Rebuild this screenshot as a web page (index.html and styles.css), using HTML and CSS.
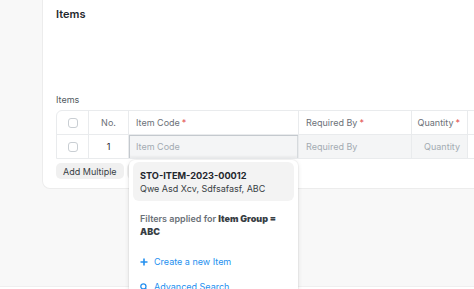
FILE: index.html
```html
<!DOCTYPE html>
<html lang="en">
<head>
    <meta charset="UTF-8">
    <meta name="viewport" content="width=device-width, initial-scale=1.0">
    <title>Items</title>
    <link rel="stylesheet" href="styles.css">
</head>
<body>
    <div class="page">
        <div class="card">
            <h2 class="section-title">Items</h2>
            <div class="field-label">Items</div>

            <div class="grid">
                <div class="row head">
                    <div class="cell check"><span class="box"></span></div>
                    <div class="cell no">No.</div>
                    <div class="cell">Item Code <span class="req">*</span></div>
                    <div class="cell">Required By <span class="req">*</span></div>
                    <div class="cell right">Quantity <span class="req">*</span></div>
                    <div class="cell"></div>
                </div>
                <div class="row data">
                    <div class="cell check"><span class="box"></span></div>
                    <div class="cell no idx">1</div>
                    <div class="cell input focused">
                        <span class="placeholder">Item Code</span>
                        <div class="dropdown">
                            <div class="option active">
                                <div class="option-title">STO-ITEM-2023-00012</div>
                                <div class="option-desc">Qwe Asd Xcv, Sdfsafasf, ABC</div>
                            </div>
                            <div class="filter-note">Filters applied for <b>Item Group = ABC</b></div>
                            <div class="action">
                                <svg width="8" height="8" viewBox="0 0 8 8"><path d="M4 0.5v7M0.5 4h7" stroke="#2490ef" stroke-width="1.6"/></svg>
                                <span>Create a new Item</span>
                            </div>
                            <div class="action">
                                <svg width="8" height="8" viewBox="0 0 8 8"><circle cx="3.4" cy="3.4" r="2.6" fill="none" stroke="#2490ef" stroke-width="1.3"/><path d="M5.3 5.3l2.2 2.2" stroke="#2490ef" stroke-width="1.3"/></svg>
                                <span>Advanced Search</span>
                            </div>
                        </div>
                    </div>
                    <div class="cell input"><span class="placeholder">Required By</span></div>
                    <div class="cell input right"><span class="placeholder">Quantity</span></div>
                    <div class="cell"></div>
                </div>
            </div>

            <div class="actions">
                <button class="btn">Add Multiple</button>
                <button class="btn">Add Row</button>
            </div>
        </div>
    </div>
    <div class="next-card"></div>
</body>
</html>
```
FILE: styles.css
```css
html {
    background-color: #f8f8f8;
}

body {
    margin: 0;
    height: 289px;
    overflow: hidden;
    background-color: #f8f8f8;
    font-family: Inter, 'Noto Sans', sans-serif;
    color: #1f272e;
}

.page {
    display: flex;
    align-items: flex-start;
    height: 286px;
    padding-left: 42px;
    background-color: #f8f8f8;
}

.card {
    flex: 1;
    margin-right: -60px;
    background-color: #fff;
    border: 1px solid #ececec;
    border-top: none;
    border-radius: 0 0 8px 8px;
    padding: 6px 0 9px 13px;
}

.section-title {
    margin: 0 0 72px;
    font-size: 11px;
    line-height: 16px;
    font-weight: 600;
}

.field-label {
    font-size: 9px;
    line-height: 12px;
    color: #525a61;
    margin-bottom: 4px;
}

.grid {
    border: 1px solid #e9ebed;
    border-radius: 6px 0 0 0;
}

.row {
    display: grid;
    grid-template-columns: 32px 40px 170px 113px 56px 1fr;
    height: 23px;
}

.row.head {
    height: 24px;
    border-bottom: 1px solid #e9ebed;
    box-sizing: border-box;
}

.cell {
    display: flex;
    align-items: center;
    box-sizing: border-box;
    border-right: 1px solid #e9ebed;
    padding: 0 7px;
    font-size: 9px;
    color: #6b7178;
    white-space: nowrap;
}

.cell.check,
.cell.no {
    justify-content: center;
    padding: 0;
}

.cell.right {
    justify-content: flex-end;
}

.idx {
    color: #1f272e;
}

.req {
    color: #e24c4c;
    margin-left: 2px;
}

.box {
    width: 8px;
    height: 8px;
    border: 1px solid #c9ced3;
    border-radius: 3px;
    background-color: #fff;
}

.cell.input {
    background-color: #f4f5f6;
}

.placeholder {
    color: #a3abb2;
}

.focused {
    position: relative;
    background-color: #f3f3f3;
    box-shadow: inset 1px 1px 0 #c4c9ce, inset -1px 0 0 #d6dadd, inset 0 -2px 2px rgba(0, 0, 0, 0.04);
}

.dropdown {
    position: absolute;
    top: 25px;
    left: 0;
    width: 169px;
    height: 140px;
    box-sizing: border-box;
    padding: 2px 4px;
    background-color: #fff;
    border-radius: 6px;
    box-shadow: 0 1px 5px rgba(0, 0, 0, 0.1), 0 0 0 1px rgba(0, 0, 0, 0.03);
    z-index: 5;
    white-space: normal;
}

.option {
    padding: 7px 7px 6px;
    border-radius: 6px;
}

.option.active {
    background-color: #f3f3f3;
}

.option-title {
    font-size: 9.2px;
    line-height: 13px;
    font-weight: 700;
    color: #1f272e;
}

.option-desc {
    font-size: 9px;
    line-height: 13px;
    color: #383e44;
}

.filter-note {
    padding: 11px 7px 0;
    font-size: 9px;
    line-height: 13px;
    font-weight: 600;
    color: #6b7178;
}

.filter-note b {
    color: #383e44;
}

.action {
    display: flex;
    align-items: center;
    gap: 6px;
    margin-top: 17px;
    padding: 0 7px;
    font-size: 9px;
    line-height: 13px;
    color: #2490ef;
}

.action + .action {
    margin-top: 12px;
}

.actions {
    display: flex;
    gap: 3px;
    margin-top: 4px;
}

.btn {
    height: 16px;
    padding: 0 7px;
    border: none;
    border-radius: 5px;
    background-color: #f0f0f0;
    font-family: inherit;
    font-size: 9px;
    color: #383e44;
}

.next-card {
    height: 3px;
    background-color: #fff;
    border-top: 1px solid #efefef;
}
```
